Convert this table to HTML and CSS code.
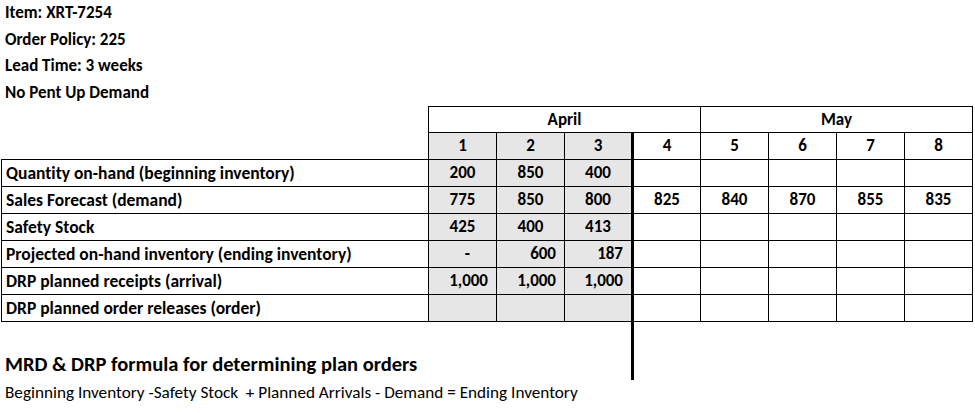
FILE: index.html
```html
<!DOCTYPE html>
<html lang="en">
<head>
<meta charset="utf-8">
<title>DRP Table</title>
<link rel="stylesheet" href="styles.css">
</head>
<body>
<div class="page">
  <div class="meta">
    <div class="meta-line">Item: XRT-7254</div>
    <div class="meta-line">Order Policy: 225</div>
    <div class="meta-line">Lead Time: 3 weeks</div>
    <div class="meta-line">No Pent Up Demand</div>
  </div>
  <table class="drp">
    <colgroup>
      <col class="c-label">
      <col class="c-week"><col class="c-week"><col class="c-week"><col class="c-week">
      <col class="c-week"><col class="c-week"><col class="c-week"><col class="c-week">
    </colgroup>
    <thead>
      <tr class="row-month">
        <th class="blank"></th>
        <th class="month" colspan="4">April</th>
        <th class="month" colspan="4">May</th>
      </tr>
      <tr class="row-week">
        <th class="blank"></th>
        <th class="g">1</th><th class="g">2</th><th class="g cut">3</th><th>4</th>
        <th>5</th><th>6</th><th>7</th><th>8</th>
      </tr>
    </thead>
    <tbody>
      <tr>
        <td class="label">Quantity on-hand (beginning inventory)</td>
        <td class="g">200</td><td class="g">850</td><td class="g cut">400</td><td></td>
        <td></td><td></td><td></td><td></td>
      </tr>
      <tr>
        <td class="label">Sales Forecast (demand)</td>
        <td class="g">775</td><td class="g">850</td><td class="g cut">800</td><td>825</td>
        <td>840</td><td>870</td><td>855</td><td>835</td>
      </tr>
      <tr>
        <td class="label">Safety Stock</td>
        <td class="g">425</td><td class="g">400</td><td class="g cut">413</td><td></td>
        <td></td><td></td><td></td><td></td>
      </tr>
      <tr>
        <td class="label">Projected on-hand inventory (ending inventory)</td>
        <td class="g acct"><span class="dash">-</span></td><td class="g acct">600</td><td class="g cut acct">187</td><td></td>
        <td></td><td></td><td></td><td></td>
      </tr>
      <tr>
        <td class="label">DRP planned receipts (arrival)</td>
        <td class="g acct">1,000</td><td class="g acct">1,000</td><td class="g cut acct">1,000</td><td></td>
        <td></td><td></td><td></td><td></td>
      </tr>
      <tr>
        <td class="label">DRP planned order releases (order)</td>
        <td class="g"></td><td class="g"></td><td class="g cut"></td><td></td>
        <td></td><td></td><td></td><td></td>
      </tr>
    </tbody>
  </table>
  <div class="formula-head">
    <h2 class="formula-title">MRD &amp; DRP formula for determining plan orders</h2>
  </div>
  <p class="formula">Beginning Inventory -Safety Stock&nbsp; + Planned Arrivals - Demand = Ending Inventory</p>
</div>
</body>
</html>
```
FILE: styles.css
```css
html, body {
  margin: 0;
  padding: 0;
  background: #ffffff;
}

body {
  font-family: "Carlito", "Lato", "Open Sans", sans-serif;
  font-variant-ligatures: none;
  color: #000000;
}

.page {
  width: 975px;
  height: 413px;
  overflow: hidden;
}

.meta {
  height: 106px;
  padding-left: 5px;
  box-sizing: border-box;
}

.meta-line {
  font-weight: 700;
  font-size: 17px;
  line-height: 26.5px;
}

.drp {
  border-collapse: collapse;
  table-layout: fixed;
  width: 971px;
  margin-left: 1px;
  font-size: 17px;
  font-weight: 700;
}

.c-label { width: 427px; }
.c-week { width: 68px; }

.drp th,
.drp td {
  border: 1px solid #000000;
  padding: 0;
  text-align: center;
  vertical-align: middle;
  line-height: 20px;
  overflow: hidden;
  white-space: nowrap;
}

.row-month { height: 26px; }
.row-week { height: 27px; }
.drp tbody tr { height: 27px; }

.drp th.blank {
  border: none;
}

.drp th.month {
  font-weight: 700;
}

.drp .g {
  background: #e6e6e6;
}

.drp .cut {
  border-right: 3px solid #000000;
}

.drp td.label {
  text-align: left;
  padding-left: 4px;
  font-size: 17.5px;
}

.drp td.acct {
  text-align: right;
  padding-right: 8px;
}

.dash {
  display: inline-block;
  margin-right: 18px;
}

.formula-head {
  width: 626px;
  height: 58px;
  border-right: 3px solid #000000;
  display: flex;
  align-items: flex-end;
  padding-left: 5px;
  box-sizing: content-box;
}

.formula-title {
  margin: 0;
  font-size: 20.5px;
  font-weight: 700;
  line-height: 24px;
  padding-bottom: 4px;
}

.formula {
  margin: 3px 0 0 5px;
  font-size: 17.2px;
  font-weight: 400;
  line-height: 20px;
}
```
